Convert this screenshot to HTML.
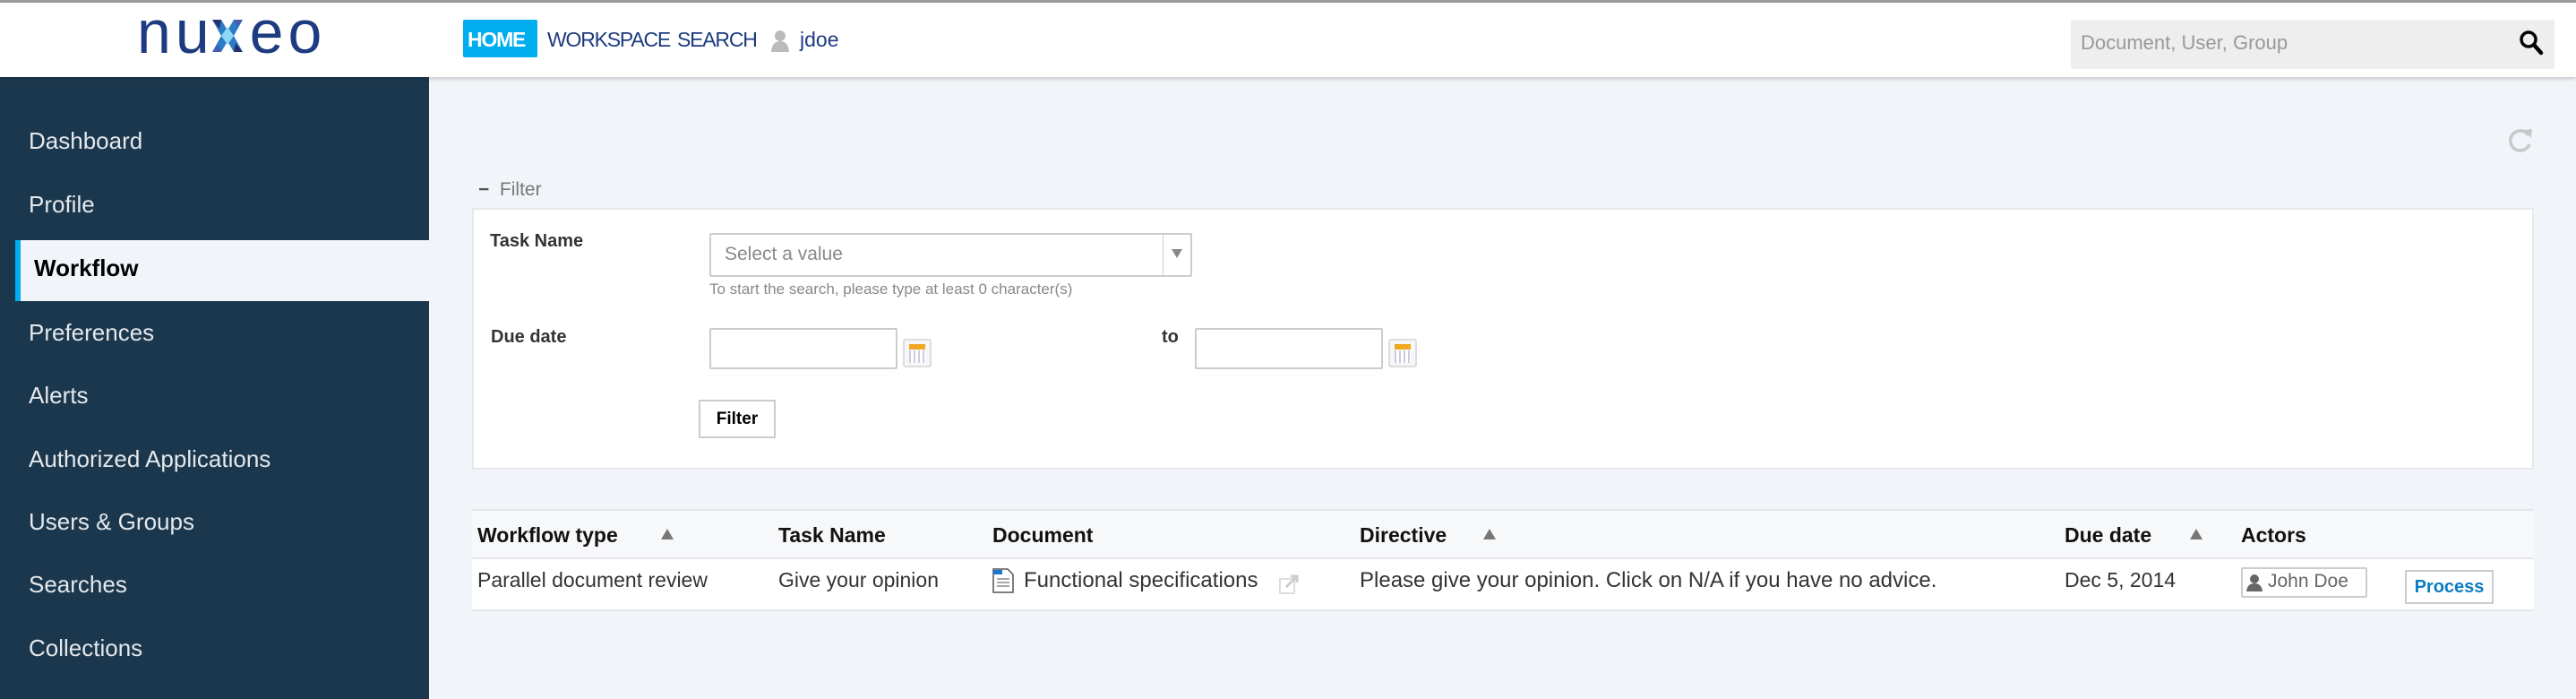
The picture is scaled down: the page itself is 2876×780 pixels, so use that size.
<!DOCTYPE html>
<html><head><meta charset="utf-8"><style>
*{box-sizing:border-box;margin:0;padding:0}
body{width:2876px;height:780px;overflow:hidden;background:#f1f4f8;font-family:"Liberation Sans",sans-serif;position:relative}
.abs{position:absolute}
#hdr{left:0;top:0;width:2876px;height:86px;background:#fff;border-top:3px solid #9a9a9a;box-shadow:0 2px 4px rgba(0,0,0,.18);z-index:2}
#side{left:0;top:86px;width:479px;height:694px;background:#1b374d}
.mi{position:absolute;left:32px;color:#e4e8ec;font-size:26px}
.nav{position:absolute;top:28px;font-size:23px;color:#1d3b80;letter-spacing:-1.2px}
.lbl{position:absolute;font-size:20px;font-weight:bold;color:#333}
.inp{position:absolute;background:#fff;border:2px solid #ccc;border-radius:2px}
.th{position:absolute;top:584px;font-size:23px;font-weight:bold;color:#111}
.td{position:absolute;top:634px;font-size:23px;color:#333}
.arr{position:absolute;top:590px;width:0;height:0;border-left:7px solid transparent;border-right:7px solid transparent;border-bottom:12px solid #777}
.cal{position:absolute;width:32px;height:32px;border:2px solid #ddd;border-radius:3px;background:#f4f6fa}
.cal:before{content:"";position:absolute;left:5px;top:4px;width:18px;height:6px;background:#f0a820}
.cal:after{content:"";position:absolute;left:5px;top:11px;width:18px;height:14px;background:repeating-linear-gradient(90deg,#ccd 0 2px,#fff 2px 5px)}
</style></head><body>
<div id="hdr" class="abs">
  <div class="abs" style="left:153px;top:-6px;font-size:68px;color:#1d3b80;letter-spacing:5px">nu<span style="display:inline-block;width:40px"></span>eo</div>
  <svg class="abs" style="left:237px;top:19px" width="34" height="36" viewBox="0 0 34 36">
    <polygon points="0,0 10,0 17,12 24,0 34,0 24,18 34,36 24,36 17,24 10,36 0,36 10,18" fill="#2a7cc4"/>
    <polygon points="10,18 17,8 24,18 17,28" fill="#8fd8f4"/>
    <polygon points="0,0 10,0 8,10" fill="#27306a"/><polygon points="24,36 34,36 26,26" fill="#27306a"/>
    <polygon points="24,0 34,0 28,8" fill="#4a5ab0"/><polygon points="0,36 10,36 6,28" fill="#4a5ab0"/>
  </svg>
  <div class="abs" style="left:517px;top:19px;width:83px;height:42px;background:#00adee;border-radius:2px"></div>
  <div class="nav" style="left:522px;color:#fff;font-weight:bold">HOME</div>
  <div class="nav" style="left:611px">WORKSPACE</div>
  <div class="nav" style="left:756px">SEARCH</div>
  <svg class="abs" style="left:860px;top:29px" width="22" height="26" viewBox="0 0 22 26"><circle cx="11" cy="8" r="6" fill="#bbb"/><path d="M1 26 Q2 14 11 14 Q20 14 21 26Z" fill="#bbb"/></svg>
  <div class="nav" style="left:893px;letter-spacing:0">jdoe</div>
  <div class="abs" style="left:2312px;top:19px;width:540px;height:55px;background:#eee;border-radius:2px"></div>
  <div class="abs" style="left:2323px;top:32px;font-size:22px;color:#999">Document, User, Group</div>
  <svg class="abs" style="left:2812px;top:30px" width="28" height="30" viewBox="0 0 28 30"><circle cx="11" cy="11" r="8" fill="none" stroke="#000" stroke-width="3.5"/><line x1="17" y1="17" x2="25" y2="26" stroke="#000" stroke-width="4.5" stroke-linecap="round"/></svg>
</div>
<div id="side" class="abs">
  <div class="mi" style="top:56px">Dashboard</div>
  <div class="mi" style="top:127px">Profile</div>
  <div class="abs" style="left:17px;top:182px;width:462px;height:68px;background:#f1f4f8;border-left:6px solid #00adee"></div>
  <div class="mi" style="top:198px;left:38px;color:#000;font-weight:bold">Workflow</div>
  <div class="mi" style="top:270px">Preferences</div>
  <div class="mi" style="top:340px">Alerts</div>
  <div class="mi" style="top:411px">Authorized Applications</div>
  <div class="mi" style="top:481px">Users &amp; Groups</div>
  <div class="mi" style="top:551px">Searches</div>
  <div class="mi" style="top:622px">Collections</div>
</div>
<svg class="abs" style="left:2799px;top:142px" width="30" height="30" viewBox="0 0 30 30"><path d="M24 9 A11 11 0 1 0 25 19" fill="none" stroke="#c8c8c8" stroke-width="3.5"/><polygon points="18,3 28,2 27,12" fill="#c8c8c8"/></svg>
<div class="abs" style="left:534px;top:200px;font-size:21px;color:#777"><b style="color:#555">−</b>&nbsp; Filter</div>
<div class="abs" style="left:527px;top:232px;width:2302px;height:292px;background:#fff;border:2px solid #e6e8ec"></div>
<div class="lbl" style="left:547px;top:258px">Task Name</div>
<div class="inp" style="left:792px;top:260px;width:539px;height:49px"></div>
<div class="abs" style="left:1298px;top:262px;width:1px;height:45px;background:#ccc"></div>
<div class="abs" style="left:1308px;top:278px;border-left:6px solid transparent;border-right:6px solid transparent;border-top:10px solid #888"></div>
<div class="abs" style="left:809px;top:272px;font-size:21px;color:#888">Select a value</div>
<div class="abs" style="left:792px;top:313px;font-size:17px;color:#888">To start the search, please type at least 0 character(s)</div>
<div class="lbl" style="left:548px;top:365px">Due date</div>
<div class="inp" style="left:792px;top:366px;width:210px;height:46px"></div>
<div class="cal" style="left:1008px;top:378px"></div>
<div class="lbl" style="left:1297px;top:365px">to</div>
<div class="inp" style="left:1334px;top:366px;width:210px;height:46px"></div>
<div class="cal" style="left:1550px;top:378px"></div>
<div class="abs" style="left:780px;top:446px;width:86px;height:43px;background:#fff;border:2px solid #ccc;font-size:19px;font-weight:bold;text-align:center;line-height:39px">Filter</div>
<div class="abs" style="left:527px;top:568px;width:2302px;height:56px;background:#f7f8fa;border-top:2px solid #e4e6ea;border-bottom:2px solid #e4e6ea"></div>
<div class="abs" style="left:527px;top:624px;width:2302px;height:58px;background:#fff;border-bottom:2px solid #e4e6ea"></div>
<div class="th" style="left:533px">Workflow type</div><div class="arr" style="left:738px"></div>
<div class="th" style="left:869px">Task Name</div>
<div class="th" style="left:1108px">Document</div>
<div class="th" style="left:1518px">Directive</div><div class="arr" style="left:1656px"></div>
<div class="th" style="left:2305px">Due date</div><div class="arr" style="left:2445px"></div>
<div class="th" style="left:2502px">Actors</div>
<div class="td" style="left:533px">Parallel document review</div>
<div class="td" style="left:869px">Give your opinion</div>
<svg class="abs" style="left:1108px;top:634px" width="26" height="28" viewBox="0 0 26 28"><path d="M1 1 H17 L23 7 V27 H1Z" fill="#fff" stroke="#555" stroke-width="1.5"/><rect x="1" y="2" width="10" height="5" fill="#1a7ad0"/><path d="M5 12H19M5 16H19M5 20H19" stroke="#888" stroke-width="1.5"/></svg>
<div class="td" style="left:1143px;font-size:24px">Functional specifications</div>
<svg class="abs" style="left:1428px;top:641px" width="22" height="22" viewBox="0 0 22 22"><rect x="1" y="5" width="16" height="16" fill="none" stroke="#ddd" stroke-width="2"/><path d="M8 14L20 2M13 2H20V9" stroke="#ccc" stroke-width="3" fill="none"/></svg>
<div class="td" style="left:1518px;font-size:24px">Please give your opinion. Click on N/A if you have no advice.</div>
<div class="td" style="left:2305px">Dec 5, 2014</div>
<div class="abs" style="left:2502px;top:633px;width:141px;height:34px;border:2px solid #ccc;border-radius:2px;background:#fff"></div>
<svg class="abs" style="left:2508px;top:640px" width="18" height="20" viewBox="0 0 18 20"><circle cx="9" cy="6" r="5" fill="#666"/><path d="M0 20 Q1 11 9 11 Q17 11 18 20Z" fill="#666"/></svg>
<div class="abs" style="left:2532px;top:637px;font-size:21px;color:#666">John Doe</div>
<div class="abs" style="left:2685px;top:636px;width:99px;height:38px;border:2px solid #ccc;background:#fff;font-size:20px;font-weight:bold;color:#0a7cc2;text-align:center;line-height:34px">Process</div>
</body></html>
